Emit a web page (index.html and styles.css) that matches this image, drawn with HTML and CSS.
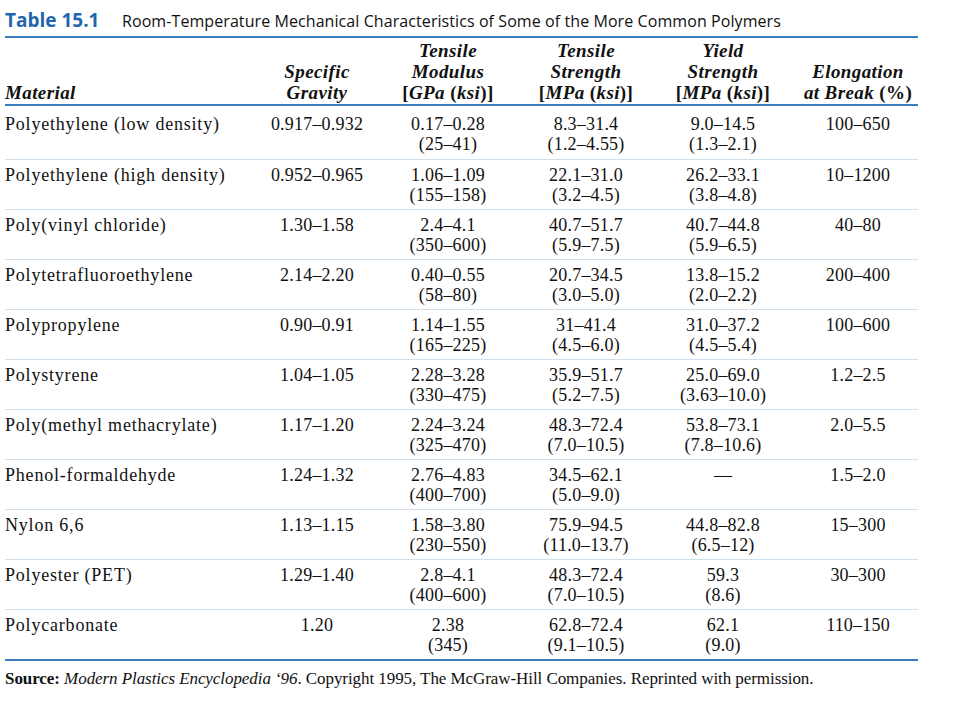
FILE: index.html
```html
<!DOCTYPE html>
<html>
<head>
<meta charset="utf-8">
<link rel="stylesheet" href="styles.css">
</head>
<body>
<div class="page">
  <div class="title"><span class="num">Table 15.1</span><span class="cap">Room-Temperature Mechanical Characteristics of Some of the More Common Polymers</span></div>
  <table class="data">
    <colgroup>
      <col class="c1"><col class="c2"><col class="c3"><col class="c4"><col class="c5"><col class="c6">
    </colgroup>
    <thead>
      <tr>
        <th class="left">Material</th>
        <th>Specific<br>Gravity</th>
        <th>Tensile<br>Modulus<br><span class="up">[</span>GPa <span class="up">(</span>ksi<span class="up">)]</span></th>
        <th>Tensile<br>Strength<br><span class="up">[</span>MPa <span class="up">(</span>ksi<span class="up">)]</span></th>
        <th>Yield<br>Strength<br><span class="up">[</span>MPa <span class="up">(</span>ksi<span class="up">)]</span></th>
        <th>Elongation<br>at Break <span class="up">(%)</span></th>
      </tr>
    </thead>
    <tbody>
      <tr class="first"><td class="left">Polyethylene (low density)</td><td>0.917–0.932</td><td>0.17–0.28<br>(25–41)</td><td>8.3–31.4<br>(1.2–4.55)</td><td>9.0–14.5<br>(1.3–2.1)</td><td>100–650</td></tr>
      <tr><td class="left">Polyethylene (high density)</td><td>0.952–0.965</td><td>1.06–1.09<br>(155–158)</td><td>22.1–31.0<br>(3.2–4.5)</td><td>26.2–33.1<br>(3.8–4.8)</td><td>10–1200</td></tr>
      <tr><td class="left">Poly(vinyl chloride)</td><td>1.30–1.58</td><td>2.4–4.1<br>(350–600)</td><td>40.7–51.7<br>(5.9–7.5)</td><td>40.7–44.8<br>(5.9–6.5)</td><td>40–80</td></tr>
      <tr><td class="left">Polytetrafluoroethylene</td><td>2.14–2.20</td><td>0.40–0.55<br>(58–80)</td><td>20.7–34.5<br>(3.0–5.0)</td><td>13.8–15.2<br>(2.0–2.2)</td><td>200–400</td></tr>
      <tr><td class="left">Polypropylene</td><td>0.90–0.91</td><td>1.14–1.55<br>(165–225)</td><td>31–41.4<br>(4.5–6.0)</td><td>31.0–37.2<br>(4.5–5.4)</td><td>100–600</td></tr>
      <tr><td class="left">Polystyrene</td><td>1.04–1.05</td><td>2.28–3.28<br>(330–475)</td><td>35.9–51.7<br>(5.2–7.5)</td><td>25.0–69.0<br>(3.63–10.0)</td><td>1.2–2.5</td></tr>
      <tr><td class="left">Poly(methyl methacrylate)</td><td>1.17–1.20</td><td>2.24–3.24<br>(325–470)</td><td>48.3–72.4<br>(7.0–10.5)</td><td>53.8–73.1<br>(7.8–10.6)</td><td>2.0–5.5</td></tr>
      <tr><td class="left">Phenol-formaldehyde</td><td>1.24–1.32</td><td>2.76–4.83<br>(400–700)</td><td>34.5–62.1<br>(5.0–9.0)</td><td>—</td><td>1.5–2.0</td></tr>
      <tr><td class="left">Nylon 6,6</td><td>1.13–1.15</td><td>1.58–3.80<br>(230–550)</td><td>75.9–94.5<br>(11.0–13.7)</td><td>44.8–82.8<br>(6.5–12)</td><td>15–300</td></tr>
      <tr><td class="left">Polyester (PET)</td><td>1.29–1.40</td><td>2.8–4.1<br>(400–600)</td><td>48.3–72.4<br>(7.0–10.5)</td><td>59.3<br>(8.6)</td><td>30–300</td></tr>
      <tr class="last"><td class="left">Polycarbonate</td><td>1.20</td><td>2.38<br>(345)</td><td>62.8–72.4<br>(9.1–10.5)</td><td>62.1<br>(9.0)</td><td>110–150</td></tr>
    </tbody>
  </table>
  <p class="source"><b>Source:</b> <i>Modern Plastics Encyclopedia ‘96</i>. Copyright 1995, The McGraw-Hill Companies. Reprinted with permission.</p>
</div>
</body>
</html>
```
FILE: styles.css
```css
html, body {
  margin: 0;
  padding: 0;
  background: #ffffff;
}
.page {
  width: 913px;
  padding-left: 5px;
  color: #111111;
  font-family: "Liberation Serif", "Times New Roman", serif;
}
.title {
  display: flex;
  align-items: baseline;
  height: 38px;
  box-sizing: border-box;
  padding-top: 7px;
  border-bottom: 2px solid #3b7dbd;
  font-family: "Open Sans", "DejaVu Sans", sans-serif;
}
.title .num {
  font-size: 19px;
  font-weight: 700;
  color: #1f66ad;
  width: 117px;
}
.title .cap {
  font-size: 16px;
  letter-spacing: 0.08px;
  color: #111111;
}
.data {
  width: 913px;
  border-collapse: collapse;
  table-layout: fixed;
  font-size: 18px;
}
.c1 { width: 257px; }
.c2 { width: 110px; }
.c3 { width: 152px; }
.c4 { width: 124px; }
.c5 { width: 150px; }
.c6 { width: 120px; }
.data th {
  font-size: 19px;
  font-weight: 700;
  font-style: italic;
  letter-spacing: 0.4px;
  line-height: 21px;
  padding: 2px 0 1px;
  vertical-align: bottom;
  text-align: center;
  border-bottom: 2px solid #3b7dbd;
}
.data th .up {
  font-style: normal;
}
.data td {
  line-height: 20px;
  letter-spacing: 0.2px;
  padding: 5px 0 4px;
  vertical-align: top;
  text-align: center;
  white-space: nowrap;
  border-bottom: 1px solid #cfe0ec;
}
.data td.left {
  letter-spacing: 0.8px;
}
.data .left {
  text-align: left;
}
.data tr.first td {
  padding-top: 8px;
  padding-bottom: 5px;
}
.data tr.last td {
  border-bottom: 2px solid #3b7dbd;
}
.source {
  margin: 8px 0 0;
  font-size: 17px;
  letter-spacing: -0.07px;
  line-height: 20px;
}
```
